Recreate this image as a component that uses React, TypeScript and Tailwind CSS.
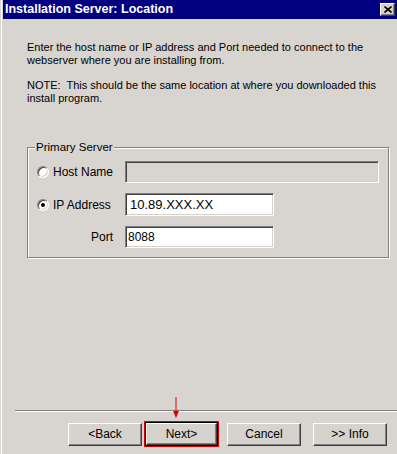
import React from "react";

const raised =
  "border border-t-white border-l-white border-b-[#404040] border-r-[#404040] shadow-[inset_-1px_-1px_0_#808080]";
const sunken =
  "border border-t-[#808080] border-l-[#808080] border-b-white border-r-white shadow-[inset_1px_1px_0_#404040,inset_-1px_-1px_0_#d4d0c8]";

function Radio({ checked }: { checked?: boolean }) {
  return (
    <span
      className={`w-[12px] h-[12px] rounded-full bg-white flex items-center justify-center ${sunken}`}
    >
      {checked && <span className="w-[4px] h-[4px] rounded-full bg-black" />}
    </span>
  );
}

function Button({ label }: { label: string }) {
  return (
    <button
      className={`w-[74px] h-[23px] bg-[#d6d2ce] text-[12px] text-black flex items-center justify-center ${raised}`}
    >
      {label}
    </button>
  );
}

export default function App() {
  return (
    <div
      className="w-[397px] h-[454px] bg-[#d8d4d0] flex text-black overflow-hidden"
      style={{ fontFamily: '"Liberation Sans", Arial, sans-serif' }}
    >
      <div className="w-px ml-px bg-white shrink-0" />
      <div className="flex-1 flex flex-col ml-px">
        {/* title bar */}
        <div className="h-[19px] bg-[#000080] flex items-center justify-between pl-[2px] pr-[2px] shrink-0">
          <span className="text-white font-bold text-[12.5px] leading-none">
            Installation Server: Location
          </span>
          <button
            className={`w-[15px] h-[13px] bg-[#d6d2ce] flex items-center justify-center ${raised}`}
          >
            <svg width="8" height="7" viewBox="0 0 8 7">
              <path d="M0.5 0.5 L7.5 6.5 M7.5 0.5 L0.5 6.5" stroke="#000" strokeWidth="1.6" />
            </svg>
          </button>
        </div>

        {/* body */}
        <div className="flex-1 flex flex-col">
          <div className="pl-[24px] pt-[22px] text-[11px] leading-[13px] whitespace-nowrap">
            <p>
              Enter the host name or IP address and Port needed to connect to the
              <br />
              webserver where you are installing from.
            </p>
            <p className="mt-[12px]">
              NOTE:&nbsp; This should be the same location at where you downloaded this
              <br />
              install program.
            </p>
          </div>

          <fieldset className="ml-[24px] mr-[8px] mt-[36px] border border-[#808080] shadow-[1px_1px_0_#fff,inset_1px_1px_0_#fff] px-[9px] pb-[9px] pt-[7px]">
            <legend className="ml-[-2px] px-[1px] text-[11.5px] leading-[13px] bg-[#d8d4d0]">
              Primary Server
            </legend>
            <div className="grid grid-cols-[16px_72px_1fr] items-center gap-y-[10px] text-[12px]">
              <Radio />
              <span>Host Name</span>
              <div className={`h-[22px] bg-[#d8d4d0] ${sunken}`} />

              <Radio checked />
              <span>IP Address</span>
              <div
                className={`h-[23px] w-[149px] bg-white flex items-center pl-[4px] text-[13px] ${sunken}`}
              >
                10.89.XXX.XX
              </div>

              <span />
              <span className="text-right pr-[12px]">Port</span>
              <div
                className={`h-[22px] w-[149px] bg-white flex items-center pl-[2px] text-[12px] ${sunken}`}
              >
                8088
              </div>
            </div>
          </fieldset>

          <div className="flex-1" />

          <div className="ml-[12px] h-[2px] border-t border-t-[#808080] border-b border-b-white" />

          <div className="flex items-center pl-[65px] pt-[9px] pb-[7px]">
            <Button label="<Back" />
            <div className="relative ml-[2px] border border-[#e00000]">
              <div className="border border-black">
                <button
                  className={`w-[71px] h-[22px] bg-[#d6d2ce] text-[12px] flex items-center justify-center ${raised}`}
                >
                  Next&gt;
                </button>
              </div>
              <svg
                className="absolute left-[27px] top-[-25px]"
                width="8"
                height="22"
                viewBox="0 0 8 22"
              >
                <path d="M4 0 V16" stroke="#e00000" strokeWidth="1" />
                <path d="M1 14 L7 14 L4 21 Z" fill="#e00000" />
              </svg>
            </div>
            <div className="ml-[8px]">
              <Button label="Cancel" />
            </div>
            <div className="ml-[12px]">
              <Button label=">> Info" />
            </div>
          </div>
        </div>
      </div>
    </div>
  );
}
